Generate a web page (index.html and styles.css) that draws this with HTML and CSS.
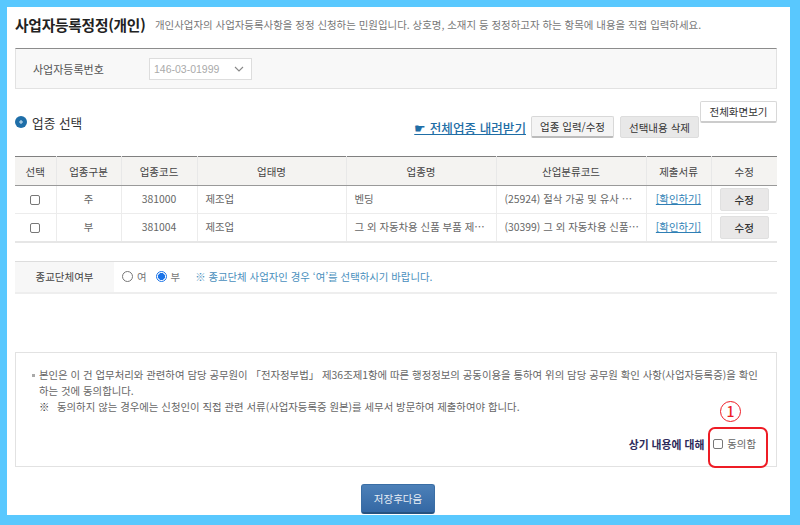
FILE: index.html
```html
<!DOCTYPE html>
<html lang="ko">
<head>
<meta charset="utf-8">
<title>사업자등록정정(개인)</title>
<link rel="stylesheet" href="styles.css">
</head>
<body>
<main class="page">
  <header class="head">
    <h1>사업자등록정정(개인)</h1>
    <p>개인사업자의 사업자등록사항을 정정 신청하는 민원입니다. 상호명, 소재지 등 정정하고자 하는 항목에 내용을 직접 입력하세요.</p>
  </header>

  <section class="bizno">
    <span class="bizno-label">사업자등록번호</span>
    <span class="select">146-03-01999
      <svg width="10" height="6" viewBox="0 0 10 6"><path d="M1 1l4 4 4-4" fill="none" stroke="#888" stroke-width="1.1"/></svg>
    </span>
  </section>

  <section class="toolbar">
    <h2><span class="bullet"><svg width="12" height="12" viewBox="0 0 12 12"><circle cx="6" cy="6" r="6" fill="#1e6ea8"/><path d="M4 6h4M6 4v4" stroke="#cfe4f2" stroke-width="1"/></svg></span>업종 선택</h2>
    <div class="tools">
      <a class="download">☛ 전체업종 내려받기</a>
      <button class="btn btn-raised">업종 입력/수정</button>
      <button class="btn btn-grey">선택내용 삭제</button>
      <button class="btn btn-view">전체화면보기</button>
    </div>
  </section>

  <table class="grid">
    <colgroup>
      <col class="c1"><col class="c2"><col class="c3"><col class="c4"><col class="c5"><col class="c6"><col class="c7"><col class="c8">
    </colgroup>
    <thead>
      <tr><th>선택</th><th>업종구분</th><th>업종코드</th><th>업태명</th><th>업종명</th><th>산업분류코드</th><th>제출서류</th><th>수정</th></tr>
    </thead>
    <tbody>
      <tr>
        <td class="mid"><span class="check"></span></td><td class="mid">주</td><td class="mid">381000</td><td>제조업</td><td>벤딩</td>
        <td>(25924) 절삭 가공 및 유사 …</td><td class="mid"><a class="link">[확인하기]</a></td><td class="mid act"><button class="edit">수정</button></td>
      </tr>
      <tr>
        <td class="mid"><span class="check"></span></td><td class="mid">부</td><td class="mid">381004</td><td>제조업</td><td>그 외 자동차용 신품 부품 제…</td>
        <td>(30399) 그 외 자동차용 신품…</td><td class="mid"><a class="link">[확인하기]</a></td><td class="mid act"><button class="edit">수정</button></td>
      </tr>
    </tbody>
  </table>

  <section class="religion">
    <div class="religion-label">종교단체여부</div>
    <div class="religion-body">
      <span class="radio"></span><span class="opt">여</span>
      <span class="radio radio-on"></span><span class="opt">부</span>
      <span class="note">※ 종교단체 사업자인 경우 ‘여’를 선택하시기 바랍니다.</span>
    </div>
  </section>

  <section class="consent">
    <p class="c-main">본인은 이 건 업무처리와 관련하여 담당 공무원이 「전자정부법」 제36조제1항에 따른 행정정보의 공동이용을 통하여 위의 담당 공무원 확인 사항(사업자등록증)을 확인하는 것에 동의합니다.</p>
    <p class="c-sub"><span class="c-mark">※</span>동의하지 않는 경우에는 신청인이 직접 관련 서류(사업자등록증 원본)를 세무서 방문하여 제출하여야 합니다.</p>
    <div class="agree">
      <strong>상기 내용에 대해</strong>
      <span class="check"></span>
      <span>동의함</span>
    </div>
    <div class="callout"></div>
    <div class="callout-num">1</div>
  </section>

  <footer class="actions"><button class="save">저장후다음</button></footer>
</main>
</body>
</html>
```

FILE: styles.css
```css
* { box-sizing: border-box; }
html, body { margin: 0; height: 525px; overflow: hidden; }
body {
  background: #59c8fe;
  padding: 7px 10px 10px 7px;
  font-family: "Noto Sans CJK KR", "Liberation Sans", sans-serif;
  font-size: 10px;
  color: #555;
}
button { font-family: inherit; }
.page {
  background: #fff;
  height: 508px;
  padding: 0 13px 0 8px;
  width: 783px;
}
.head { display: flex; align-items: center; height: 41px; padding-bottom: 7px; }
.head h1 { margin: 0; font-size: 14.7px; font-weight: 700; color: #222; width: 140px; white-space: nowrap; letter-spacing: -.2px; }
.head p { margin: 0; font-size: 10.45px; color: #777; white-space: nowrap; }
.bizno {
  height: 41px;
  border: 1px solid #e2e2e2;
  border-top: 1px solid #8c8c8c;
  background: #f8f8f8;
  display: flex;
  align-items: center;
  padding-left: 17px;
}
.bizno-label { width: 116px; font-size: 11px; color: #555; }
.select {
  width: 103px;
  height: 22px;
  background: #fff;
  border: 1px solid #ddd;
  display: flex;
  align-items: center;
  justify-content: space-between;
  padding: 0 7px 0 4px;
  font-family: "Liberation Sans", sans-serif;
  font-size: 10.5px;
  color: #aaa;
}
.toolbar { display: flex; justify-content: space-between; height: 67px; }
.toolbar h2 {
  margin: 0;
  display: flex;
  align-items: center;
  gap: 5px;
  height: 20px;
  margin-top: 23px;
  font-size: 12.7px;
  font-weight: 400;
  color: #333;
}
.bullet { display: flex; }
.tools { display: flex; align-items: flex-start; padding-top: 12px; }
.download {
  margin-top: 20px;
  margin-right: 5px;
  font-size: 12.6px;
  font-weight: 500;
  line-height: 14px;
  color: #1f6ea6;
  text-decoration: underline;
  white-space: nowrap;
}
.btn {
  height: 22px;
  padding: 0;
  font-size: 10.5px;
  color: #333;
  border-radius: 2px;
  white-space: nowrap;
}
.btn-raised {
  width: 83px;
  margin-top: 15px;
  background: #f4f4f4;
  border: 1px solid #d8d8d8;
  border-bottom: 2px solid #bbb;
}
.btn-grey {
  width: 79px;
  margin: 15px 1px 0 6px;
  background: #e8e8e8;
  border: 1px solid #ddd;
}
.btn-view {
  width: 77px;
  background: #fff;
  border: 1px solid #d8d8d8;
  border-bottom: 2px solid #ccc;
}
.grid {
  width: 762px;
  table-layout: fixed;
  border-collapse: collapse;
  border-top: 1px solid #808080;
  border-bottom: 2px solid #e6e6e6;
}
.c1 { width: 41px; } .c2 { width: 65px; } .c3 { width: 76px; } .c4 { width: 149px; }
.c5 { width: 150px; } .c6 { width: 150px; } .c7 { width: 65px; } .c8 { width: 66px; }
.grid th {
  height: 29px;
  padding: 0;
  background: #f4f3f1;
  border-bottom: 1px solid #999;
  border-left: 1px solid #e8e8e8;
  font-size: 10.5px;
  font-weight: 400;
  color: #444;
}
.grid th:first-child, .grid td:first-child { border-left: 0; }
.grid td {
  height: 28px;
  padding: 0 8px 2px;
  border-bottom: 1px solid #ececec;
  border-left: 1px solid #ececec;
  font-size: 10.4px;
  color: #666;
  white-space: nowrap;
  overflow: hidden;
}
.grid tbody tr:last-child td { border-bottom: 0; }
.grid td.mid { text-align: center; padding: 0 0 2px; }
.grid td.act { padding: 0; }
.check {
  display: inline-block;
  width: 10px;
  height: 10px;
  border: 1px solid #777;
  border-radius: 2px;
  background: #fff;
  vertical-align: middle;
}
.link { color: #2f7fb5; text-decoration: underline; }
.edit {
  width: 49px;
  height: 23px;
  padding: 0;
  background: #e9e8e8;
  border: 1px solid #e0e0e0;
  border-radius: 2px;
  font-size: 10.5px;
  font-weight: 500;
  color: #333;
}
.religion {
  display: flex;
  margin-top: 18px;
  height: 33px;
  border-top: 1px solid #ddd;
  border-bottom: 2px solid #eee;
}
.religion-label {
  width: 99px;
  background: #f7f7f7;
  display: flex;
  align-items: center;
  justify-content: center;
  font-size: 10.5px;
  color: #444;
}
.religion-body { display: flex; align-items: center; padding-left: 8px; }
.radio {
  width: 11px;
  height: 11px;
  border: 1px solid #777;
  border-radius: 50%;
  background: #fff;
}
.radio-on { border: 1px solid #1a73e8; background: radial-gradient(circle, #1a73e8 0 3.2px, #fff 3.8px); }
.opt { margin: 0 9px 0 4px; font-size: 10.4px; color: #777; }
.note { margin-left: 6px; font-size: 10.4px; color: #4a8fbd; white-space: nowrap; }
.consent {
  position: relative;
  margin-top: 58px;
  height: 115px;
  padding: 14px 18px 0 15px;
  border: 1px solid #e2e2e2;
  font-size: 10.4px;
  line-height: 16px;
  color: #666;
}
.consent p { margin: 0; }
.c-main { padding-left: 8px; position: relative; }
.c-main::before {
  content: "";
  position: absolute;
  left: 1px;
  top: 7px;
  width: 3px;
  height: 3px;
  background: #aaa;
}
.c-sub { padding-left: 8px; }
.c-mark { display: inline-block; width: 18px; color: #333; font-weight: 700; }
.agree {
  position: absolute;
  right: 20px;
  top: 83px;
  display: flex;
  align-items: center;
  gap: 4px;
  white-space: nowrap;
}
.agree strong { font-size: 10.8px; font-weight: 700; color: #2d2a5a; margin-right: 5px; }
.callout {
  position: absolute;
  left: 692px;
  top: 74px;
  width: 60px;
  height: 41px;
  border: 2px solid #ee1c25;
  border-radius: 7px;
}
.callout-num {
  position: absolute;
  left: 704px;
  top: 48px;
  width: 21px;
  height: 21px;
  border: 1px solid #ee1c25;
  border-radius: 50%;
  color: #ee1c25;
  font-size: 14px;
  font-weight: 500;
  line-height: 19px;
  text-align: center;
}
.actions { display: flex; justify-content: center; padding: 17px 0 0 4px; }
.save {
  width: 74px;
  height: 30px;
  padding: 0;
  border: 1px solid #3a6ea5;
  border-bottom: 2px solid #27527f;
  border-radius: 3px;
  background: linear-gradient(#4c80b8, #3468a4);
  color: #e8eef5;
  font-size: 10.5px;
}
```
